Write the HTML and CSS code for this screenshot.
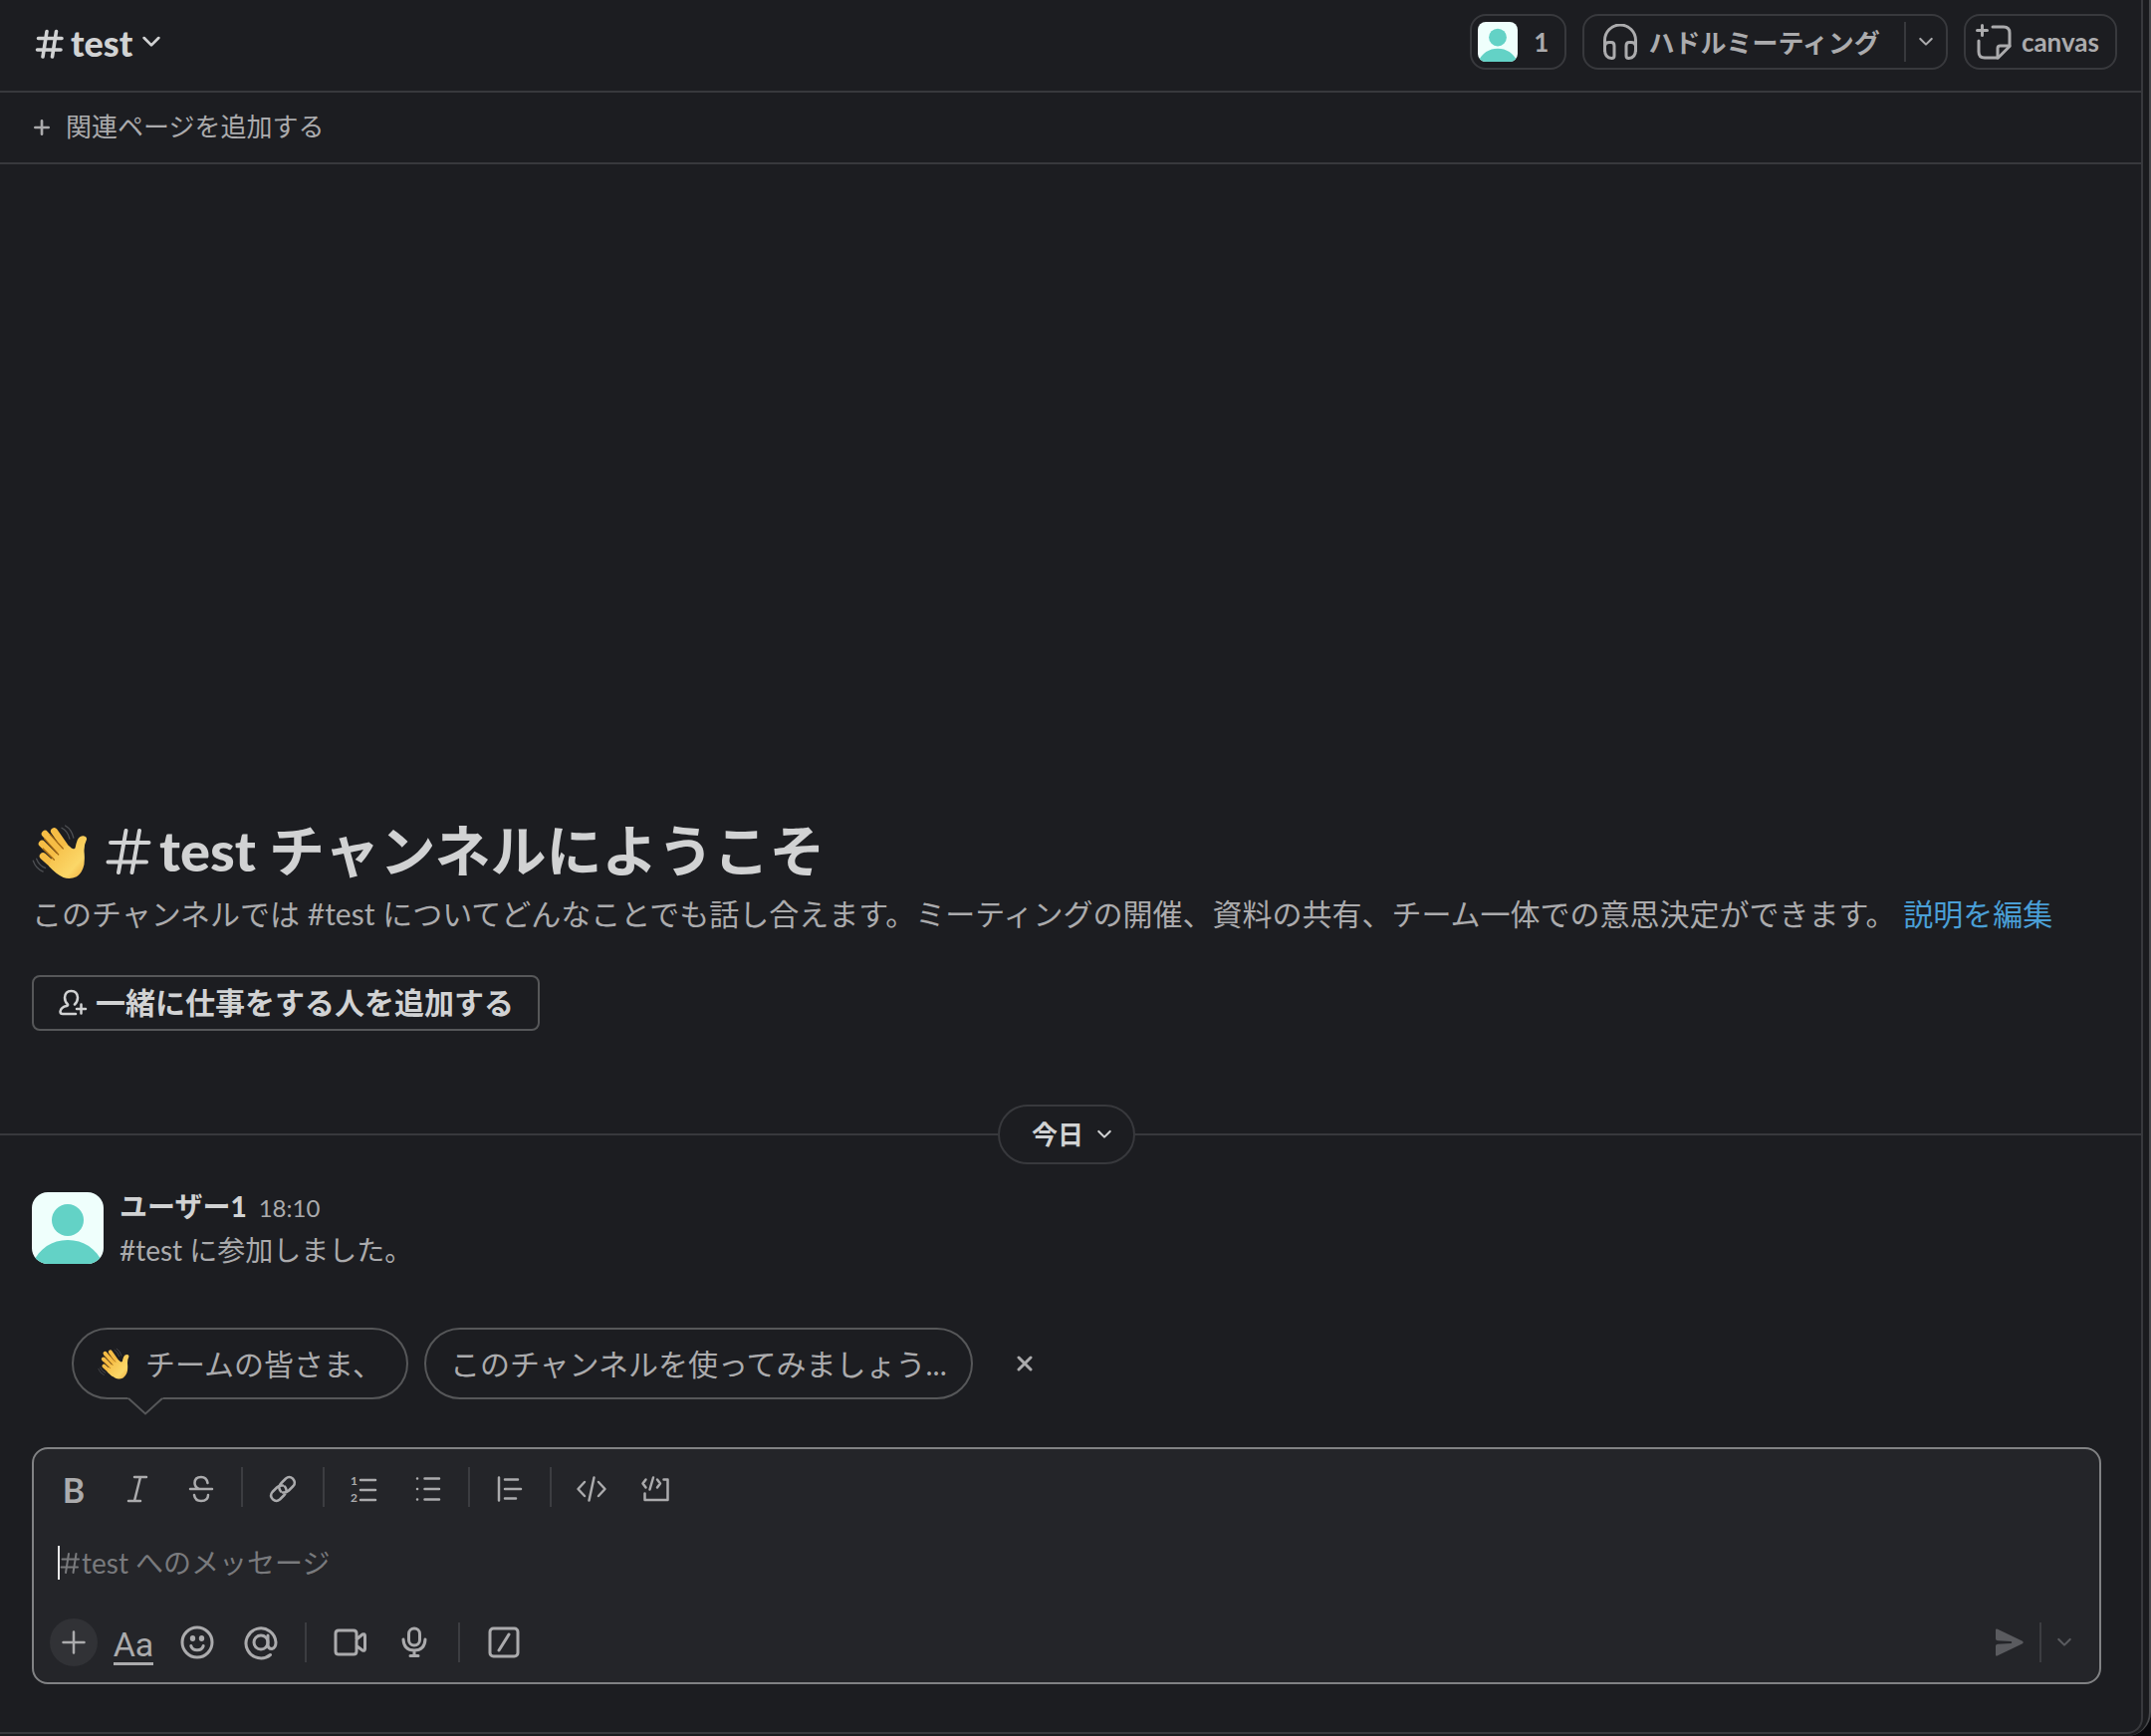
FILE: index.html
```html
<!DOCTYPE html>
<html lang="ja">
<head>
    <meta charset="UTF-8">
    <meta name="viewport" content="width=device-width, initial-scale=1.0">
    <title>test</title>
    <link rel="stylesheet" href="styles.css">
</head>
<body>

<!-- shared icons -->
<svg class="sprite" width="0" height="0" aria-hidden="true">
    <defs>
        <linearGradient id="skin" x1="0" y1="0" x2="1" y2="1">
            <stop offset="0" stop-color="#f4b63c"/>
            <stop offset="0.7" stop-color="#fbd768"/>
            <stop offset="1" stop-color="#eda93a"/>
        </linearGradient>
    </defs>
    <symbol id="chevron" viewBox="0 0 16 10">
        <path d="M1.5 1.5 L8 8 L14.500 1.500" fill="none" stroke="currentColor" stroke-width="2.400" stroke-linecap="round" stroke-linejoin="round"/>
    </symbol>
    <symbol id="avatar" viewBox="0 0 72 72">
        <rect width="72" height="72" fill="#effffc"/>
        <circle cx="36" cy="28" r="16" fill="#63d2c6"/>
        <path d="M0 72 C8 56 20 48 36 48 S64 56 72 72Z" fill="#63d2c6"/>
    </symbol>
    <symbol id="wave" viewBox="36 30 170 170">
        <path d="M70 129 L118 172 M67 91 L118 142 M76 61 L132 124 M104 53 L148 116" fill="none" stroke="#f6bd45" stroke-width="21" stroke-linecap="round"/>
        <path d="M95 138 L140 94 L151 99 Q160 111 168 104 Q170 92 175 79 Q181 67 193 67 Q204 69 203 78 Q193 98 196 122 Q198 152 192 166 Q185 184 172 192 Q152 201 132 194 Q110 184 88 160Z" fill="url(#skin)"/>
        <path d="M70 106 L104 140 M74 76 L117 124 M92 63 L131 106" fill="none" stroke="#a56a15" stroke-width="4" stroke-linecap="round"/>
        <path d="M127 43 Q145 52 151 76 M138 36 Q157 47 163 73 M50 137 Q58 158 77 165 M40 143 Q48 167 70 176" fill="none" stroke="#4d4f53" stroke-width="4" stroke-linecap="round"/>
    </symbol>
</svg>

<div class="window">
    <main class="panel">
        <header class="channel-header">
            <button class="channel-name" type="button">
                <svg class="hash-small" viewBox="0 0 30 30" aria-label="#"><path d="M12 2.500 L8 28 M21.500 2.500 L17.500 28 M3.500 9.500 H27 M2.500 21 H26" fill="none" stroke="currentColor" stroke-width="3.600" stroke-linecap="round"/></svg>
                <span>test</span>
                <svg class="chevron-large" aria-hidden="true"><use href="#chevron"/></svg>
            </button>
            <div class="header-actions">
                <button class="pill-button members" type="button">
                    <svg class="avatar-small" aria-hidden="true"><use href="#avatar"/></svg>
                    <span>1</span>
                </button>
                <div class="pill-button huddle">
                    <button class="huddle-start" type="button">
                        <svg class="icon-large" viewBox="0 0 36 36" fill="none" stroke="currentColor" stroke-width="3" aria-hidden="true">
                            <path d="M2.500 28 V16.500 A15.500 15.500 0 0 1 33.500 16.500 V28"/>
                            <path d="M2.500 22 Q3 18.500 7 18.500 H9 Q12 18.500 12 22 V32 Q12 34.500 9.500 34.500 Q2.500 34 2.500 26Z M33.500 22 Q33 18.500 29 18.500 H27 Q24 18.500 24 22 V32 Q24 34.500 26.500 34.500 Q33.500 34 33.500 26Z"/>
                        </svg>
                        <span class="label">ハドルミーティング</span>
                    </button>
                    <button class="huddle-more" type="button" aria-label="その他のオプション">
                        <svg class="chevron-small" aria-hidden="true"><use href="#chevron"/></svg>
                    </button>
                </div>
                <button class="pill-button canvas" type="button">
                    <svg class="icon-large" viewBox="0 0 36 36" fill="none" stroke="currentColor" stroke-width="3" stroke-linecap="round" aria-hidden="true">
                        <path d="M6.500 1.500 V11.500 M1.500 6.500 H11.500"/>
                        <path d="M17 3 H28 Q34 3 34 9 V22.500 L22.500 34 H9 Q3 34 3 28 V17" stroke-linejoin="round"/>
                        <path d="M34 22 H24.500 Q22 22 22 24.500 V34"/>
                    </svg>
                    <span>canvas</span>
                </button>
            </div>
        </header>

        <div class="bookmarks">
            <button class="bookmark-add" type="button">
                <svg class="plus-small" viewBox="0 0 18 18" aria-hidden="true"><path d="M9 1.500 V16.500 M1.500 9 H16.500" stroke="currentColor" stroke-width="3" stroke-linecap="round"/></svg>
                <span class="label">関連ページを追加する</span>
            </button>
        </div>

        <section class="messages">
            <div class="welcome">
                <h1>
                    <svg class="wave-large" role="img" aria-label="手を振る"><use href="#wave"/></svg>
                    <svg class="hash-large" viewBox="0 0 46 46" aria-label="#"><path d="M20.500 2 L13 44 M34 2 L26.500 44 M5 14 H43.500 M2.500 33.500 H41" fill="none" stroke="currentColor" stroke-width="4" stroke-linecap="round"/></svg>
                    <span class="label">test チャンネルにようこそ</span>
                </h1>
                <p>このチャンネルでは #test についてどんなことでも話し合えます。ミーティングの開催、資料の共有、チーム一体での意思決定ができます。 <a href="#edit">説明を編集</a></p>
                <button class="invite" type="button">
                    <svg class="icon-person" viewBox="0 0 28 28" fill="none" stroke="currentColor" stroke-width="2.500" stroke-linecap="round" stroke-linejoin="round" aria-hidden="true">
                        <path d="M17 25 H4 Q1.500 25 1.500 22.500 Q2.500 18 8 17 Q9.500 16.500 9 15.500 Q6 12.500 6 8.500 Q6.500 2 12.500 2 T19 8.500 Q19 12.500 16 15.500"/>
                        <path d="M22.500 15.500 V24.500 M18 20 H27"/>
                    </svg>
                    <span class="label">一緒に仕事をする人を追加する</span>
                </button>
            </div>

            <div class="day-divider">
                <button class="day" type="button">
                    <span>今日</span>
                    <svg class="chevron-small" aria-hidden="true"><use href="#chevron"/></svg>
                </button>
            </div>

            <article class="message">
                <svg class="avatar" role="img" aria-label="ユーザー1"><use href="#avatar"/></svg>
                <div>
                    <div class="message-head">
                        <strong>ユーザー1</strong>
                        <time>18:10</time>
                    </div>
                    <p>#test に参加しました。</p>
                </div>
            </article>
        </section>

        <div class="suggestions">
            <button class="chip chip-tail" type="button">
                <svg class="wave-small" aria-hidden="true"><use href="#wave"/></svg>
                <span>チームの皆さま、</span>
                <svg class="tail" viewBox="0 0 36 18" aria-hidden="true"><path d="M0 0 H36 L18 17Z" fill="#1c1d21"/><path d="M1 1 L18 16.500 L35 1" fill="none" stroke="#565759" stroke-width="2"/></svg>
            </button>
            <button class="chip" type="button">このチャンネルを使ってみましょう...</button>
            <button class="dismiss" type="button" aria-label="閉じる">
                <svg viewBox="0 0 16 16" aria-hidden="true"><path d="M2 2 L14 14 M14 2 L2 14" stroke="currentColor" stroke-width="3" stroke-linecap="round"/></svg>
            </button>
        </div>

        <form class="composer">
            <div class="toolbar format">
                <button class="tool bold" type="button" aria-label="太字">B</button>
                <button class="tool" type="button" aria-label="斜体">
                    <svg viewBox="0 0 32 32"><path d="M13 4 H25 M7 28 H19 M19 4 L13 28"/></svg>
                </button>
                <button class="tool" type="button" aria-label="取り消し線">
                    <svg viewBox="0 0 32 32"><path d="M5 16 H27 M22.500 10 Q21.500 4 16 4 Q9.500 4 9.500 10 Q9.500 14 14 16 M9 22 Q10 28 16 28 Q23 28 23 22"/></svg>
                </button>
                <span class="separator"></span>
                <button class="tool" type="button" aria-label="リンク">
                    <svg viewBox="0 0 32 32"><path d="M14 18.500 Q10.500 14 14.500 10 L19 5.500 Q22.500 2.500 26.200 5.800 Q29.500 9.500 26.500 13 L22 17.500 Q19.500 20 16 19.500 M18 13.500 Q21.500 18 17.500 22 L13 26.500 Q9.500 29.500 5.800 26.200 Q2.500 22.500 5.500 19 L10 14.500 Q12.500 12 16 12.500"/></svg>
                </button>
                <span class="separator"></span>
                <button class="tool" type="button" aria-label="順序付きリスト">
                    <svg viewBox="0 0 32 32"><path d="M12 7 H27 M12 17 H27 M12 27 H27"/><text x="2" y="12">1</text><text x="2" y="29">2</text></svg>
                </button>
                <button class="tool" type="button" aria-label="箇条書き">
                    <svg viewBox="0 0 32 32"><path d="M12.500 5.500 H27 M12.500 16 H27 M12.500 26.500 H27 M5 5.500 H5.100 M5 16 H5.100 M5 26.500 H5.100"/></svg>
                </button>
                <span class="separator"></span>
                <button class="tool" type="button" aria-label="引用">
                    <svg viewBox="0 0 32 32"><path d="M5 4.500 V27.500 M11 6.500 H24 M11 16 H27 M11 25.500 H22"/></svg>
                </button>
                <span class="separator"></span>
                <button class="tool" type="button" aria-label="コード">
                    <svg viewBox="0 0 32 32"><path d="M9 9 L2.500 16 L9 23 M23 9 L29.500 16 L23 23 M18.500 4.500 L13.500 27.500"/></svg>
                </button>
                <button class="tool" type="button" aria-label="コードブロック">
                    <svg viewBox="0 0 32 32"><path d="M6.500 6.500 L3.500 10.500 L6.500 14.500 M18 6.500 L21 10.500 L18 14.500 M14 4.500 L10.500 16.500 M24.500 6.500 H28.500 V27 H5.500 V20.500"/></svg>
                </button>
            </div>

            <div class="message-field">
                <span class="caret"></span>
                <label for="message"><svg class="hash-field" viewBox="0 0 22 26" aria-label="#"><path d="M9 4 L6 23 M16.500 4 L13.500 23 M2.500 9.500 H19 M1.500 17.500 H18" fill="none" stroke="currentColor" stroke-width="2" stroke-linecap="round"/></svg></label>
                <input type="text" id="message" name="message" placeholder="test へのメッセージ">
            </div>

            <div class="toolbar actions">
                <button class="attach" type="button" aria-label="添付">
                    <svg viewBox="0 0 32 32"><path d="M16 5.500 V26.500 M5.500 16 H26.500"/></svg>
                </button>
                <button class="tool case" type="button" aria-label="書式設定"><span>Aa</span></button>
                <button class="tool" type="button" aria-label="絵文字">
                    <svg class="icon-action" viewBox="0 0 36 36"><circle cx="18" cy="18" r="15"/><path d="M11.800 21.500 Q13 25.800 18 25.800 T24.200 21.500"/><ellipse cx="13.500" cy="14" rx="1.200" ry="1.500" fill="currentColor"/><ellipse cx="22.500" cy="14" rx="1.200" ry="1.500" fill="currentColor"/></svg>
                </button>
                <button class="tool" type="button" aria-label="メンション">
                    <svg class="icon-action" viewBox="0 0 36 36"><circle cx="18" cy="18" r="7"/><path d="M25 11 V20 Q25 24.500 29 24.500 Q33 23.500 33 18 A15 15 0 1 0 27.500 30.500"/></svg>
                </button>
                <span class="separator"></span>
                <button class="tool" type="button" aria-label="ビデオ">
                    <svg class="icon-action" viewBox="0 0 36 36"><path d="M6 6 H21 Q24 6 24 9 V27 Q24 30 21 30 H6 Q3 30 3 27 V9 Q3 6 6 6Z M24 15 L30 10 Q32.500 9 32.500 11.500 V24.500 Q32.500 27 30 26 L24 21.500"/></svg>
                </button>
                <button class="tool" type="button" aria-label="音声">
                    <svg class="icon-action" viewBox="0 0 36 36"><rect x="12.500" y="4" width="11" height="17" rx="5.500"/><path d="M7 15 Q7.500 26 18 26 Q28.500 26 29 15 M18 26 V31 M14 31.500 H22"/></svg>
                </button>
                <span class="separator"></span>
                <button class="tool" type="button" aria-label="ショートカット">
                    <svg class="icon-action" viewBox="0 0 36 36"><rect x="4" y="4" width="28" height="28" rx="3.500"/><path d="M23 10 L13 26"/></svg>
                </button>
                <div class="send-group">
                    <button class="send" type="submit" aria-label="送信">
                        <svg viewBox="0 0 28 28"><path d="M1.500 0.500 L26.500 12.500 Q29 14 26.500 15.500 L1.500 27.500 Q0 28 0 26.500 V17.500 Q0.300 16 2 15.800 L15.500 15 Q17 14 15.500 13 L2 12.200 Q0.300 12 0 10.500 V1.500 Q0 0 1.500 0.500Z"/></svg>
                    </button>
                    <span class="separator"></span>
                    <button class="send-more" type="button" aria-label="送信オプション">
                        <svg class="chevron-small" aria-hidden="true"><use href="#chevron"/></svg>
                    </button>
                </div>
            </div>
        </form>
    </main>
</div>

</body>
</html>
```

FILE: styles.css
```css
* {
    box-sizing: border-box;
}

body {
    margin: 0;
    background-color: #08080c;
    color: #d1d2d3;
    font-family: Lato, "Noto Sans CJK JP", sans-serif;
    font-size: 28px;
    overflow: hidden;
}

h1, p {
    margin: 0;
}

svg {
    display: block;
    flex: none;
}

button {
    display: flex;
    align-items: center;
    padding: 0;
    border: none;
    background: none;
    color: inherit;
    font-family: inherit;
    cursor: pointer;
}

.sprite {
    position: absolute;
}

/* kana sit a little low in the line box */
.label {
    padding-bottom: 2px;
}

.window {
    height: 100vh;
    padding: 0 6px 2px 0;
    border-right: 2px solid #47484b;
    border-radius: 0 0 24px 0;
    background-color: #1a1b1e;
}

.panel {
    display: flex;
    flex-direction: column;
    height: 100%;
    border: solid #38393d;
    border-width: 0 2px 2px 0;
    border-radius: 0 0 16px 0;
    background-color: #1c1d21;
}

/* Header */
.channel-header {
    display: flex;
    justify-content: space-between;
    align-items: flex-start;
    height: 93px;
    padding: 14px 24px 0 35px;
    border-bottom: 2px solid #38393d;
}

.channel-name {
    height: 60px;
    font-size: 36px;
    line-height: 44px;
}

.channel-name,
.welcome h1,
.message-head strong {
    font-family: "Lato Black", Lato, "Noto Sans CJK JP", sans-serif;
    font-weight: 700;
}

.channel-name span {
    margin: 0 10px 0 6px;
    padding-bottom: 3px;
}

.hash-small {
    width: 30px;
    height: 30px;
}

.chevron-large {
    width: 18px;
    height: 12px;
    margin-bottom: 4px;
}

.chevron-small {
    width: 14px;
    height: 10px;
}

.header-actions {
    display: flex;
    gap: 16px;
    color: #ababad;
}

.pill-button {
    display: flex;
    align-items: center;
    height: 56px;
    border: 2px solid #38393d;
    border-radius: 16px;
    font-size: 26px;
    font-weight: 700;
    line-height: 40px;
}

.members {
    gap: 16px;
    padding: 0 16px 0 6px;
}

.avatar-small {
    width: 40px;
    height: 40px;
    border-radius: 8px;
}

.icon-large {
    width: 36px;
    height: 36px;
}

.huddle-start {
    gap: 10px;
    height: 40px;
    padding: 0 24px 0 18px;
    border-right: 2px solid #38393d;
    font-size: 26px;
    font-weight: 700;
}

.huddle-more {
    justify-content: center;
    width: 40px;
    height: 40px;
}

.canvas {
    gap: 10px;
    padding: 0 16px 0 10px;
}

.bookmarks {
    display: flex;
    align-items: center;
    height: 72px;
    padding: 0 34px;
    border-bottom: 2px solid #38393d;
}

.bookmark-add {
    gap: 16px;
    color: #ababad;
    font-size: 26px;
    line-height: 40px;
}

.plus-small {
    width: 16px;
    height: 16px;
}

/* Messages */
.messages {
    display: flex;
    flex: 1;
    flex-direction: column;
    justify-content: flex-end;
}

.welcome {
    padding: 0 32px;
}

.welcome h1 {
    display: flex;
    align-items: center;
    height: 64px;
    margin-bottom: 8px;
    font-size: 56px;
    line-height: 64px;
}

.wave-large {
    width: 56px;
    height: 56px;
}

.hash-large {
    width: 46px;
    height: 46px;
    margin: 0 8px 0 18px;
}

.welcome p {
    margin-bottom: 40px;
    color: #ababad;
    font-size: 30px;
    line-height: 44px;
}

.welcome a {
    color: #4a9fd6;
    text-decoration: none;
}

.invite {
    gap: 8px;
    height: 56px;
    padding: 0 24px;
    border: 2px solid #565759;
    border-radius: 8px;
    font-size: 30px;
    font-weight: 700;
    line-height: 44px;
}

.icon-person {
    width: 30px;
    height: 28px;
}

.day-divider {
    display: flex;
    align-items: center;
    margin: 74px 0 28px;
}

.day-divider::before,
.day-divider::after {
    content: "";
    flex: 1;
    height: 2px;
    background-color: #38393d;
}

.day-divider::after {
    padding-right: 8px;
}

.day {
    gap: 14px;
    height: 60px;
    padding: 0 22px 0 32px;
    border: 2px solid #38393d;
    border-radius: 30px;
    font-size: 26px;
    font-weight: 700;
    line-height: 40px;
}

.message {
    display: flex;
    gap: 16px;
    height: 72px;
    padding: 0 32px;
}

.avatar {
    width: 72px;
    height: 72px;
    border-radius: 16px;
}

.message-head {
    display: flex;
    align-items: baseline;
    gap: 12px;
    height: 36px;
    line-height: 28px;
}

.message-head time {
    color: #ababad;
    font-size: 24px;
}

.message p {
    color: #ababad;
    line-height: 44px;
}

/* Suggestions */
.suggestions {
    display: flex;
    align-items: center;
    gap: 16px;
    margin: 64px 72px 48px;
    color: #ababad;
}

.chip {
    position: relative;
    gap: 16px;
    height: 72px;
    padding: 0 24px;
    border: 2px solid #565759;
    border-radius: 36px;
    font-size: 30px;
    line-height: 44px;
}

.wave-small {
    width: 32px;
    height: 32px;
}

.tail {
    position: absolute;
    top: 68px;
    left: 54px;
    width: 36px;
    height: 18px;
}

.dismiss {
    justify-content: center;
    width: 72px;
    height: 56px;
}

.dismiss svg {
    width: 16px;
    height: 16px;
}

/* Composer */
.composer {
    height: 238px;
    margin: 0 40px 48px 32px;
    padding: 12px;
    border: 2px solid #818284;
    border-radius: 16px;
    background-color: #242529;
    color: #ababad;
}

.toolbar {
    display: flex;
    align-items: center;
    gap: 8px;
}

.format {
    height: 56px;
}

.tool {
    justify-content: center;
    width: 56px;
    height: 56px;
}

.tool svg,
.attach svg {
    width: 32px;
    height: 32px;
    fill: none;
    stroke: currentColor;
    stroke-width: 2.5px;
    stroke-linecap: round;
    stroke-linejoin: round;
}

.tool .icon-action {
    width: 36px;
    height: 36px;
    stroke-width: 3px;
}

.tool text {
    fill: currentColor;
    stroke: none;
    font-size: 12px;
    font-weight: 700;
}

.bold {
    font-size: 34px;
    font-weight: 700;
}

.separator {
    width: 2px;
    height: 40px;
    margin: 0 4px 4px;
    background-color: #3c3d41;
}

.message-field {
    display: flex;
    align-items: center;
    height: 44px;
    margin: 24px 0 30px 12px;
    color: #797a7d;
}

.caret {
    width: 2px;
    height: 34px;
    background-color: #e8e8e8;
}

.hash-field {
    width: 22px;
    height: 26px;
}

.message-field input {
    flex: 1;
    height: 44px;
    padding: 0;
    border: none;
    outline: none;
    background: none;
    color: #d1d2d3;
    font-family: inherit;
    font-size: 28px;
}

.message-field input::placeholder {
    color: #797a7d;
    opacity: 1;
}

.actions {
    padding-left: 4px;
}

.actions > .separator {
    margin: 0 8px;
}

.attach {
    justify-content: center;
    width: 48px;
    height: 48px;
    border-radius: 50%;
    background-color: #313236;
}

.case {
    font-family: Roboto, sans-serif;
    font-size: 34px;
    line-height: 36px;
}

.case span {
    margin-top: 6px;
    border-bottom: 3px solid #ababad;
}

.send-group {
    display: flex;
    align-items: center;
    gap: 16px;
    margin-left: auto;
    padding-right: 16px;
    color: #5a5b5f;
}

.send-group .separator {
    margin: 0;
}

.send svg {
    width: 28px;
    height: 28px;
    fill: currentColor;
}
```
